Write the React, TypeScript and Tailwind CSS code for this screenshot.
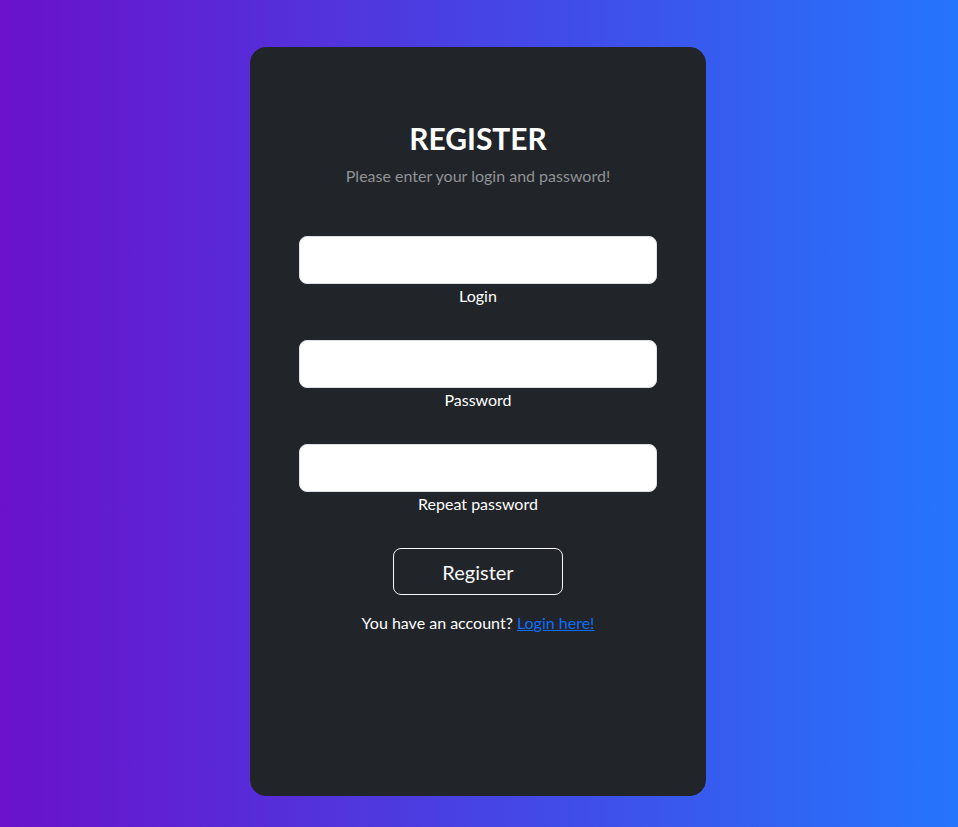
import React from "react";

export default function App() {
  return (
    <div
      className="w-full h-[827px] overflow-hidden bg-[linear-gradient(to_right,#6a11cb,#2575fc)] pt-[47px]"
      style={{ fontFamily: "Lato, 'Noto Sans', sans-serif" }}
    >
      <div className="ml-[250px] w-[456px] h-[749px] rounded-2xl bg-[#212529] border border-[#212529] px-12 pt-[72px] text-center">
        <h2 className="text-[30px] leading-[36px] font-bold text-white uppercase">Register</h2>
        <p className="mt-2 text-[16px] leading-6 text-[#909294]">Please enter your login and password!</p>

        <div className="mt-12 flex flex-col gap-8">
          {["Login", "Password", "Repeat password"].map((l) => (
            <div key={l} className="flex flex-col">
              <input
                type="text"
                className="h-12 w-full rounded-lg border border-[#dee2e6] bg-white px-4 outline-none"
              />
              <label className="text-[16px] leading-6 text-white">{l}</label>
            </div>
          ))}
        </div>

        <button className="mt-8 h-[47px] w-[170px] rounded-lg border border-[#f8f9fa] text-[20px] text-[#f8f9fa]">
          Register
        </button>

        <p className="mt-4 text-[16px] leading-6 text-white">
          You have an account?{" "}
          <a href="#" className="text-[#0d6efd] underline">
            Login here!
          </a>
        </p>
      </div>
    </div>
  );
}
